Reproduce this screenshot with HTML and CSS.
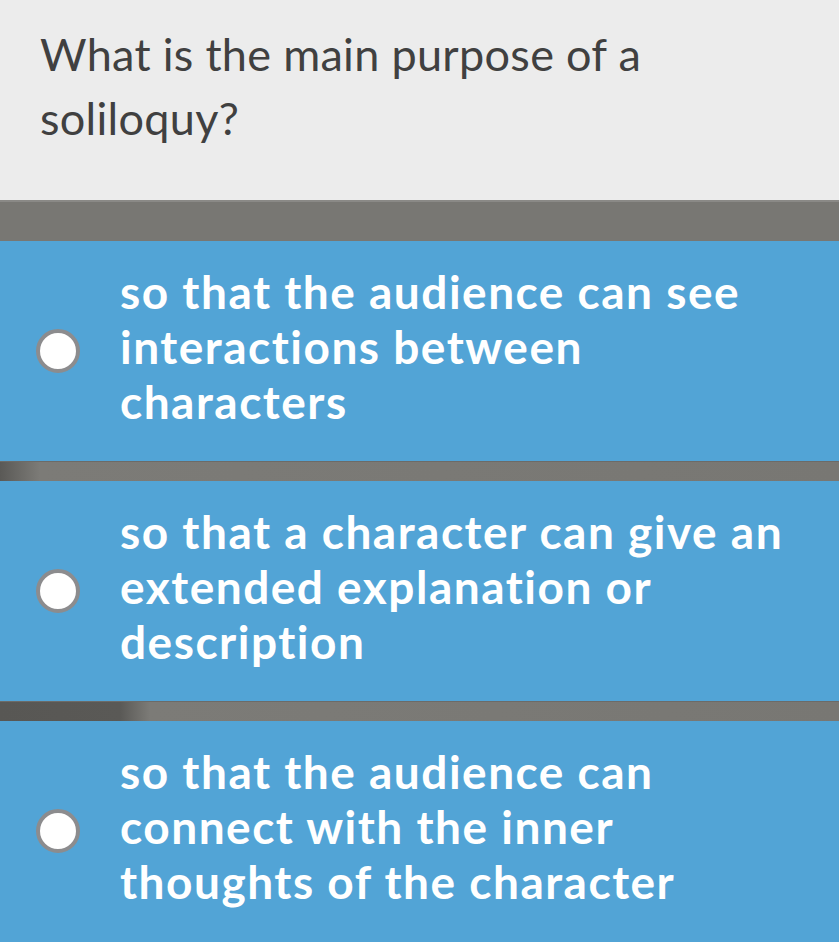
FILE: index.html
```html
<!DOCTYPE html>
<html lang="en">
<head>
    <meta charset="UTF-8">
    <meta name="viewport" content="width=device-width, initial-scale=1.0">
    <title>Quiz Question</title>
    <link rel="stylesheet" href="styles.css">
</head>
<body>
    <div class="question">What is the main purpose of a soliloquy?</div>

    <div class="answers">
        <div class="divider top"></div>

        <label class="option">
            <span class="radio"></span>
            <span class="option-text">so that the audience can see interactions between characters</span>
        </label>

        <div class="divider d1"></div>

        <label class="option">
            <span class="radio"></span>
            <span class="option-text">so that a character can give an extended explanation or description</span>
        </label>

        <div class="divider d2"></div>

        <label class="option">
            <span class="radio"></span>
            <span class="option-text">so that the audience can connect with the inner thoughts of the character</span>
        </label>
    </div>
</body>
</html>
```

FILE: styles.css
```css
body {
    margin: 0;
    padding: 0;
    background-color: #52a4d6;
    font-family: Lato, "Open Sans", sans-serif;
    overflow: hidden;
}

.question {
    height: 200px;
    box-sizing: border-box;
    padding: 22px 190px 0 40px;
    background-color: #ececec;
    color: #404040;
    font-size: 45px;
    line-height: 64px;
    letter-spacing: 0.3px;
}

.answers {
    display: flex;
    flex-direction: column;
}

.divider {
    height: 20px;
    background-color: #787773;
    border-top: 1px solid #6c6b68;
    box-sizing: border-box;
}

.divider.top {
    height: 41px;
    border-top: 2px solid #8a8986;
}

/* the photo darkens the left end of the lower bars a little */
.divider.d1 {
    background: linear-gradient(to right, #5a5956 0px, #7c7b77 40px, #787773 100%);
}

.divider.d2 {
    background: linear-gradient(to right, #585754 0px, #5a5956 120px, #7c7b77 150px, #787773 100%);
}

.option {
    height: 220px;
    display: flex;
    align-items: center;
    background-color: #52a4d6;
    padding-left: 36px;
    cursor: pointer;
}

.radio {
    flex: none;
    width: 36px;
    height: 36px;
    border: 4px solid #8c8c8e;
    border-radius: 50%;
    background-color: white;
}

.option-text {
    margin-left: 40px;
    padding-right: 30px;
    padding-bottom: 10px;
    color: white;
    font-weight: bold;
    font-size: 46px;
    line-height: 55px;
    letter-spacing: 1.5px;
}
```
